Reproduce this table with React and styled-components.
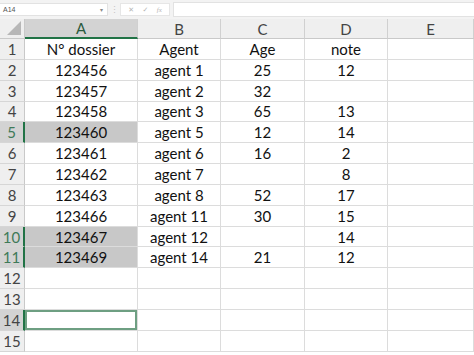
import React from "react";
import styled, { createGlobalStyle, css } from "styled-components";

const GlobalStyle = createGlobalStyle`
  html, body {
    margin: 0;
    padding: 0;
    background: #ffffff;
    overflow: hidden;
  }
  body {
    font-family: "Lato", "Open Sans", sans-serif;
  }
`;

const columns = ["A", "B", "C", "D", "E"];

const rows = [
  ["N° dossier", "Agent", "Age", "note"],
  ["123456", "agent 1", "25", "12"],
  ["123457", "agent 2", "32", ""],
  ["123458", "agent 3", "65", "13"],
  ["123460", "agent 5", "12", "14"],
  ["123461", "agent 6", "16", "2"],
  ["123462", "agent 7", "", "8"],
  ["123463", "agent 8", "52", "17"],
  ["123466", "agent 11", "30", "15"],
  ["123467", "agent 12", "", "14"],
  ["123469", "agent 14", "21", "12"],
  ["", "", "", ""],
  ["", "", "", ""],
  ["", "", "", ""],
  ["", "", "", ""],
];

// rows holding a selection in column A (1-based)
const selectedRows = [5, 10, 11];
const activeRow = 14;

export default function App() {
  return (
    <>
      <GlobalStyle />
      <Sheet>
        <FormulaBar>
          <NameBox>
            <span>A14</span>
            <Caret>▾</Caret>
          </NameBox>
          <Dots>⋮</Dots>
          <FxBox>
            <FxIcon>✕</FxIcon>
            <FxIcon>✓</FxIcon>
            <FxIcon $italic>fx</FxIcon>
          </FxBox>
          <FormulaInput />
        </FormulaBar>

        <Grid>
          <Corner>
            <svg width="16" height="16" viewBox="0 0 16 16">
              <polygon points="15,1 15,15 1,15" fill="#b7b7b7" />
            </svg>
          </Corner>
          {columns.map((c) => (
            <ColHeader key={c} $selected={c === "A"}>
              {c}
            </ColHeader>
          ))}

          {rows.map((row, i) => {
            const n = i + 1;
            const sel = selectedRows.includes(n);
            const act = n === activeRow;
            return (
              <React.Fragment key={n}>
                <RowHeader $selected={sel} $active={act}>
                  {n}
                </RowHeader>
                {row.map((value, j) => (
                  <Cell
                    key={j}
                    $selected={j === 0 && sel}
                    $active={j === 0 && act}
                  >
                    {value}
                  </Cell>
                ))}
                <Cell />
              </React.Fragment>
            );
          })}
        </Grid>
      </Sheet>
    </>
  );
}

const Sheet = styled.div`
  display: flex;
  flex-direction: column;
  width: 474px;
  height: 355px;
  overflow: hidden;
`;

const FormulaBar = styled.div`
  display: flex;
  align-items: center;
  height: 19px;
  padding: 0 0 0 0;
  background: #f3f3f3;
  box-sizing: border-box;
`;

const NameBox = styled.div`
  display: flex;
  align-items: center;
  justify-content: space-between;
  width: 108px;
  height: 13px;
  box-sizing: border-box;
  background: #ffffff;
  border: 1px solid #e2e2e2;
  border-left: none;
  padding: 0 4px 0 3px;
  font-family: "Liberation Sans", sans-serif;
  font-size: 7px;
  color: #555555;
`;

const Caret = styled.span`
  font-size: 6px;
  color: #888888;
`;

const Dots = styled.div`
  width: 12px;
  text-align: center;
  font-size: 9px;
  color: #c4c4c4;
`;

const FxBox = styled.div`
  display: flex;
  align-items: center;
  justify-content: space-around;
  width: 50px;
  height: 13px;
  box-sizing: border-box;
  background: #ffffff;
  border: 1px solid #e6e6e6;
  padding: 0 3px;
`;

const FxIcon = styled.span`
  font-family: ${(p) => (p.$italic ? '"Liberation Serif", serif' : '"DejaVu Sans", sans-serif')};
  font-style: ${(p) => (p.$italic ? "italic" : "normal")};
  font-size: 7px;
  color: #b5b5b5;
`;

const FormulaInput = styled.div`
  flex: 1;
  height: 13px;
  margin-left: 3px;
  background: #ffffff;
  border: 1px solid #e2e2e2;
  border-right: none;
`;

const Grid = styled.div`
  display: grid;
  grid-template-columns: 25px 113px 83px 84px 83px 1fr;
  grid-template-rows: 20px;
  grid-auto-rows: 20.85px;
  font-size: 15px;
  color: #111111;
`;

const headerBase = css`
  display: flex;
  align-items: center;
  justify-content: center;
  box-sizing: border-box;
  background: #efefef;
  color: #444444;
  font-size: 15px;
`;

const Corner = styled.div`
  ${headerBase};
  justify-content: flex-end;
  align-items: flex-end;
  border-right: 1px solid #c9c9c9;
  border-bottom: 1px solid #c9c9c9;
  padding: 0 2px 2px 0;
`;

const ColHeader = styled.div`
  ${headerBase};
  border-right: 1px solid #d0d0d0;
  border-bottom: ${(p) => (p.$selected ? "2px solid #217346" : "1px solid #c9c9c9")};
  background: ${(p) => (p.$selected ? "#d3d3d3" : "#efefef")};
  color: ${(p) => (p.$selected ? "#2b5a3e" : "#444444")};
`;

const RowHeader = styled.div`
  ${headerBase};
  border-bottom: 1px solid #d6d6d6;
  border-right: ${(p) =>
    p.$selected || p.$active ? "2px solid #217346" : "1px solid #c9c9c9"};
  background: ${(p) => (p.$selected || p.$active ? "#d3d3d3" : "#efefef")};
  color: ${(p) => (p.$selected ? "#3f7a58" : "#444444")};
`;

const Cell = styled.div`
  display: flex;
  align-items: center;
  justify-content: center;
  box-sizing: border-box;
  border-right: 1px solid #dcdcdc;
  border-bottom: 1px solid #dcdcdc;
  white-space: nowrap;
  overflow: hidden;
  background: ${(p) => (p.$selected ? "#c8c8c8" : "#ffffff")};
  ${(p) =>
    p.$active &&
    css`
      box-shadow: inset 0 0 0 2px #6e9f82;
    `}
`;
